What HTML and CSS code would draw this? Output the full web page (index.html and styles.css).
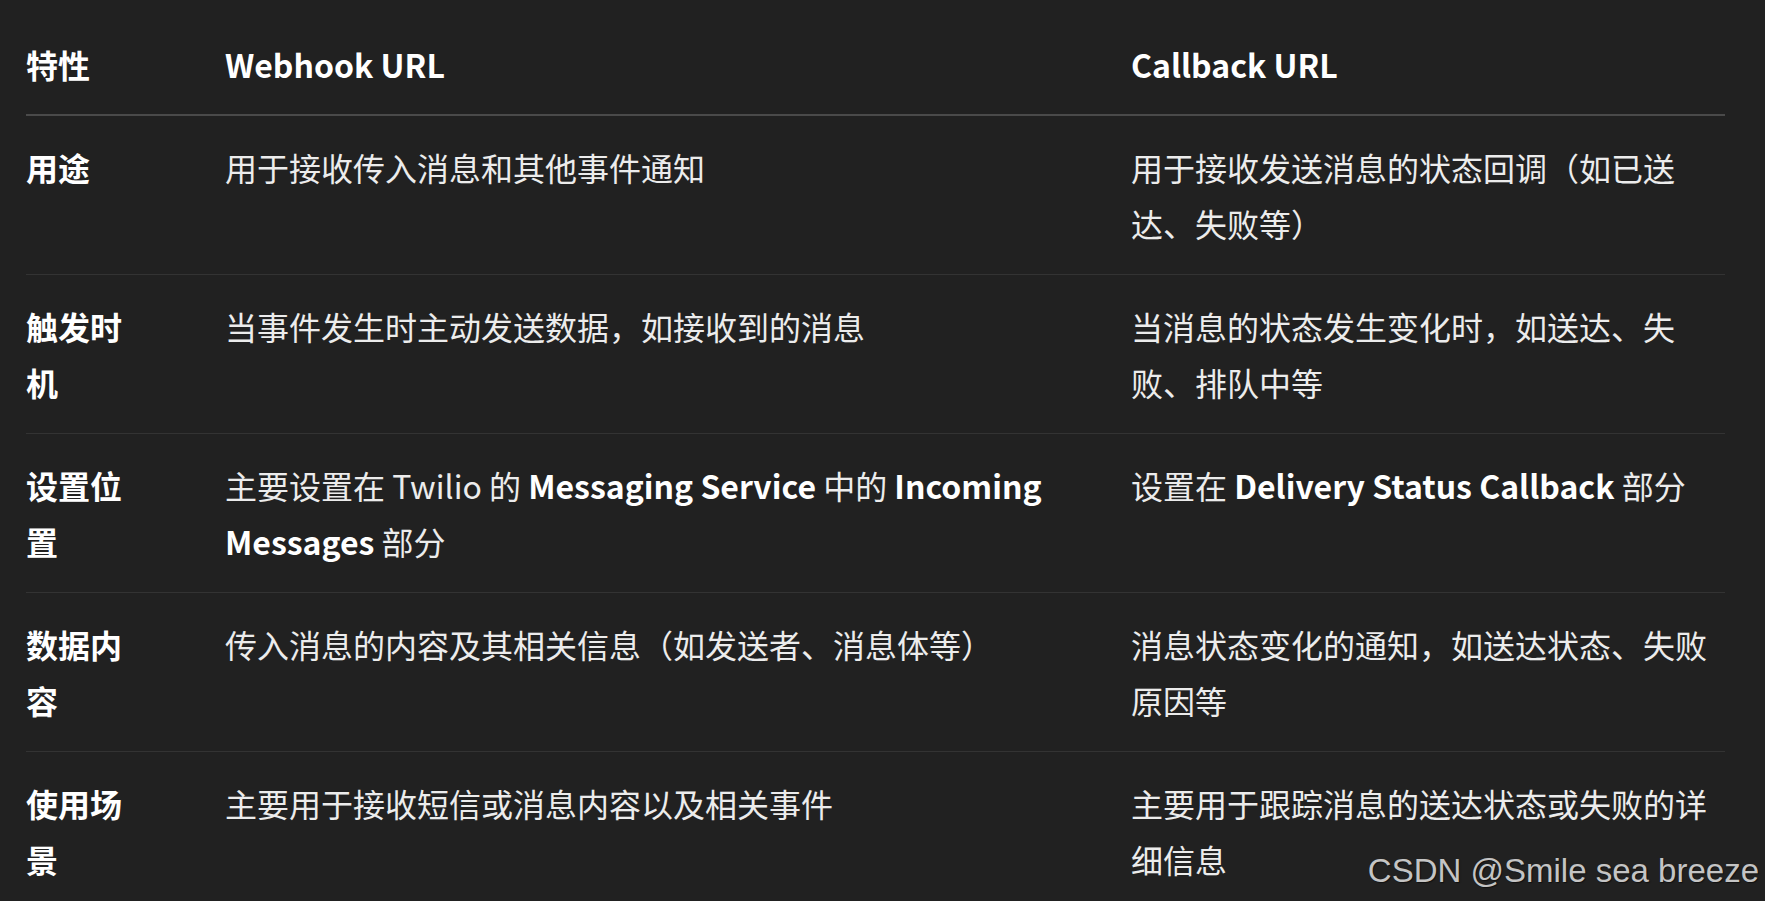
FILE: index.html
```html
<!DOCTYPE html>
<html lang="zh-CN">
<head>
    <meta charset="UTF-8">
    <meta name="viewport" content="width=device-width, initial-scale=1.0">
    <title>Webhook URL 与 Callback URL</title>
    <link rel="stylesheet" href="styles.css">
</head>
<body>
    <div class="page">
        <table class="compare">
            <colgroup>
                <col class="col-feature">
                <col class="col-webhook">
                <col class="col-callback">
            </colgroup>
            <thead>
                <tr>
                    <th class="feature">特性</th>
                    <th>Webhook URL</th>
                    <th class="last">Callback URL</th>
                </tr>
            </thead>
            <tbody>
                <tr>
                    <td class="feature">用途</td>
                    <td>用于接收传入消息和其他事件通知</td>
                    <td class="last">用于接收发送消息的状态回调（如已送达、失败等）</td>
                </tr>
                <tr>
                    <td class="feature">触发时机</td>
                    <td>当事件发生时主动发送数据，如接收到的消息</td>
                    <td class="last">当消息的状态发生变化时，如送达、失败、排队中等</td>
                </tr>
                <tr>
                    <td class="feature">设置位置</td>
                    <td>主要设置在 Twilio 的 <strong>Messaging Service</strong> 中的 <strong>Incoming Messages</strong> 部分</td>
                    <td class="last">设置在 <strong>Delivery Status Callback</strong> 部分</td>
                </tr>
                <tr>
                    <td class="feature">数据内容</td>
                    <td>传入消息的内容及其相关信息（如发送者、消息体等）</td>
                    <td class="last">消息状态变化的通知，如送达状态、失败原因等</td>
                </tr>
                <tr>
                    <td class="feature">使用场景</td>
                    <td>主要用于接收短信或消息内容以及相关事件</td>
                    <td class="last">主要用于跟踪消息的送达状态或失败的详细信息</td>
                </tr>
            </tbody>
        </table>
    </div>

    <div class="watermark">CSDN @Smile sea breeze</div>
</body>
</html>
```

FILE: styles.css
```css
body {
    margin: 0;
    background-color: #212121;
    color: #ececec;
    font-family: "Noto Sans CJK SC", "Noto Sans", sans-serif;
    font-size: 32px;
    line-height: 1.75;
    height: 100vh;
    overflow: hidden;
}
.page {
    padding: 13px 0 0 26px;
}
.compare {
    width: 1699px;
    table-layout: fixed;
    border-collapse: collapse;
}
.col-feature {
    width: 199px;
}
.col-webhook {
    width: 906px;
}
.col-callback {
    width: 594px;
}
.compare th,
.compare td {
    text-align: left;
    vertical-align: top;
    padding: 23px 24px 23px 0;
}
.compare th {
    color: #fff;
    font-weight: bold;
    padding-bottom: 22px;
    border-bottom: 2px solid #4a4a4a;
}
.compare td {
    border-bottom: 1px solid #333333;
}
.compare .feature {
    color: #fff;
    font-weight: bold;
    padding-right: 80px;
}
.compare .last {
    padding-right: 4px;
}
.compare strong {
    color: #fff;
    font-weight: bold;
}
.watermark {
    position: absolute;
    right: 6px;
    top: 852px;
    font-family: "Liberation Sans", Arial, sans-serif;
    font-size: 33px;
    line-height: normal;
    color: #c4c4c4;
    text-shadow: 1px 1px 1px rgba(0, 0, 0, 0.5);
}
```
